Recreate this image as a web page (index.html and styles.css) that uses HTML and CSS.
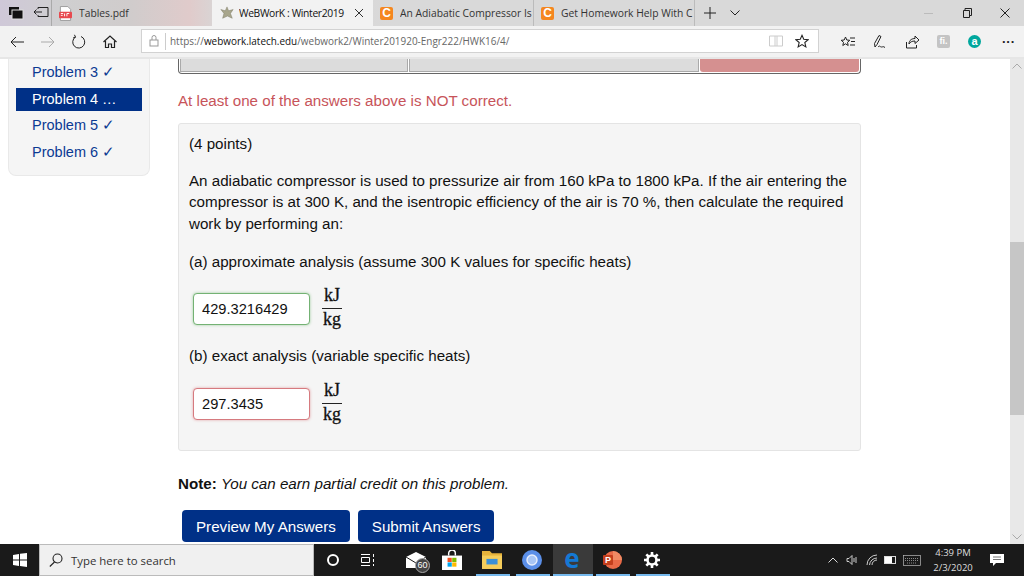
FILE: index.html
```html
<!DOCTYPE html>
<html lang="en">
<head>
<meta charset="utf-8">
<title>WeBWorK : Winter201920</title>
<link rel="stylesheet" href="styles.css">
</head>
<body>
<div class="app">
  <div class="tabbar">
    <div class="tab-tools">
      <svg class="ic16" viewBox="0 0 16 16"><rect x="1" y="2" width="10" height="8" fill="#111"/><rect x="4" y="5" width="11" height="9" fill="#111" stroke="#ddd" stroke-width="1"/></svg>
      <svg class="ic16" viewBox="0 0 16 16" fill="none" stroke="#222"><path d="M5 4V2.500h10v9H5V10M1 7h8M3.500 4.500L1 7l2.500 2.500"/></svg>
    </div>
    <div class="tab tab-pdf">
      <svg class="favicon" viewBox="0 0 14 16"><path d="M1.500 .5h8l3 3v12h-11z" fill="#fff" stroke="#999"/><rect x="0" y="6" width="14" height="7" rx="1" fill="#e8494f"/><path d="M2 8h2.500M2 10h2M6 8v3M8.500 8h2.500M8.500 8v3" stroke="#fff"/></svg>
      <span class="tab-title">Tables.pdf</span>
    </div>
    <div class="tab tab-active">
      <svg class="favicon favstar" viewBox="0 0 16 16"><path d="M8 1l1.800 4.500L15 4l-3 4.500 2 5.500-5.500-2.500L3 14l1.500-5.500L1 4l5 1.500z" fill="#a8a68c" stroke="#777660" stroke-width=".5"/></svg>
      <span class="tab-title">WeBWorK : Winter2019</span>
      <svg class="tab-close" viewBox="0 0 10 10" fill="none" stroke="#333"><path d="M1 1l8 8M9 1l-8 8"/></svg>
    </div>
    <div class="tab tab-sep">
      <span class="chegg">C</span>
      <span class="tab-title">An Adiabatic Compressor Is</span>
    </div>
    <div class="tab tab-sep">
      <span class="chegg">C</span>
      <span class="tab-title">Get Homework Help With C</span>
    </div>
    <div class="tab-actions">
      <svg class="ic12" viewBox="0 0 12 12" stroke="#222" fill="none"><path d="M6 0v12M0 6h12"/></svg>
      <svg class="ic10" viewBox="0 0 10 6" stroke="#222" fill="none"><path d="M.5 .5L5 5 9.500 .5"/></svg>
    </div>
    <div class="window-controls">
      <svg class="ic10" viewBox="0 0 10 10" stroke="#bbb"><path d="M0 5.500h9"/></svg>
      <svg class="ic10" viewBox="0 0 10 10" stroke="#222" fill="none"><path d="M1.500 2.500h6v7h-6zM3 2.500V.5h6.500v7H7.500"/></svg>
      <svg class="ic10" viewBox="0 0 10 10" stroke="#222" fill="none"><path d="M.5 .5l9 9M9.500 .5l-9 9"/></svg>
    </div>
  </div>

  <div class="toolbar">
    <div class="nav">
      <svg class="ic16" viewBox="0 0 16 16" fill="none" stroke="#222"><path d="M15 8H2M7 3L2 8l5 5"/></svg>
      <svg class="ic16" viewBox="0 0 16 16" fill="none" stroke="#aaa"><path d="M1 8h13M9 3l5 5-5 5"/></svg>
      <svg class="ic16" viewBox="0 0 16 16" fill="none" stroke="#222"><path d="M4.500 3A6 6 0 1 0 10 2.500M3.500 .8l1 2.500-2.500.7"/></svg>
      <svg class="ic16" viewBox="0 0 16 16" fill="none" stroke="#222" stroke-width="1.200"><path d="M1.500 8L8 2l6.500 6M3.500 7v6.500h3V10h3v3.500h3V7"/></svg>
    </div>
    <div class="address">
      <svg class="lock" viewBox="0 0 10 12" fill="none" stroke="#999"><rect x="1" y="5" width="8" height="6"/><path d="M3 5V2.500a2 2 0 0 1 4 0V5"/></svg>
      <span class="url">https://<b>webwork.latech.edu</b>/webwork2/Winter201920-Engr222/HWK16/4/</span>
      <svg class="ic14 book" viewBox="0 0 14 12" fill="none" stroke="#ccc"><path d="M.5 1h13v10H.5zM6 1v10M8 1v10"/></svg>
      <svg class="ic14 star" viewBox="0 0 16 16" fill="none" stroke="#222" stroke-width="1.200"><path d="M8 1.500l2 4.500 5 .5-3.800 3.200 1.200 5L8 12l-4.400 2.700 1.200-5L1 6.500 6 6z"/></svg>
    </div>
    <div class="extensions">
      <svg class="ic16" viewBox="0 0 16 16" fill="none" stroke="#222"><path d="M5.500 3l1.300 3 3 .3-2.300 2 .7 3.200-2.700-1.700L2.800 11.500l.7-3.200L1.200 6.300l3-.3zM10 4h5M11 7.500h4M10 11h5"/></svg>
      <svg class="ic16" viewBox="0 0 16 16" fill="none" stroke="#222"><path d="M3 13L2.500 9.500 7 1.500l2 1L5 10.500zM6 13c2-2 2 0 3.500 0S11 12 13 13.500"/></svg>
      <svg class="ic16" viewBox="0 0 16 16" fill="none" stroke="#222"><path d="M2.500 8v6h10v-3M5 10c0-4 3-5.500 6-5.500V2l4 4-4 3.500V7C8 7 6 8 5 10z"/></svg>
      <span class="ext-grey">fi.</span>
      <span class="ext-amazon">a</span>
      <span class="ext-more">···</span>
    </div>
  </div>

  <div class="viewport">
    <div class="page">
      <aside class="sidebar">
        <a class="prob">Problem 3 ✓</a>
        <a class="prob prob-active">Problem 4 …</a>
        <a class="prob">Problem 5 ✓</a>
        <a class="prob">Problem 6 ✓</a>
      </aside>
      <main class="main">
        <div class="attempts">
          <div class="cell cell-a"></div>
          <div class="cell cell-b"></div>
          <div class="cell cell-c"></div>
        </div>
        <p class="error">At least one of the answers above is NOT correct.</p>
        <section class="problem">
          <p class="points">(4 points)</p>
          <p class="statement">An adiabatic compressor is used to pressurize air from 160 kPa to 1800 kPa. If the air entering the compressor is at 300 K, and the isentropic efficiency of the air is 70 %, then calculate the required work by performing an:</p>
          <p class="part">(a) approximate analysis (assume 300 K values for specific heats)</p>
          <div class="answer">
            <div class="field field-ok">429.3216429</div>
            <div class="frac"><span class="num">kJ</span><span class="den">kg</span></div>
          </div>
          <p class="part part-b">(b) exact analysis (variable specific heats)</p>
          <div class="answer answer-b">
            <div class="field field-bad">297.3435</div>
            <div class="frac"><span class="num">kJ</span><span class="den">kg</span></div>
          </div>
        </section>
        <p class="note"><b>Note:</b> <i>You can earn partial credit on this problem.</i></p>
        <div class="buttons">
          <div class="btn">Preview My Answers</div>
          <div class="btn">Submit Answers</div>
        </div>
      </main>
    </div>
    <div class="scrollbar">
      <svg class="arrow" viewBox="0 0 10 6" fill="none" stroke="#aaa"><path d="M.5 5.500L5 1l4.500 4.500"/></svg>
      <div class="thumb"></div>
      <svg class="arrow" viewBox="0 0 10 6" fill="none" stroke="#aaa"><path d="M.5 .5L5 5l4.500-4.500"/></svg>
    </div>
  </div>

  <div class="taskbar">
    <div class="start">
      <svg class="ic14" viewBox="0 0 14 14" fill="#fff"><path d="M0 2l6-1v5.500H0zM7 .8L14 0v6.500H7zM0 7.500h6V13l-6-1zM7 7.500h7V14l-7-1z"/></svg>
    </div>
    <div class="search">
      <svg class="ic14" viewBox="0 0 14 14" fill="none" stroke="#222" stroke-width="1.100"><circle cx="8.500" cy="5.500" r="4.500"/><path d="M5.500 9L.8 13.500"/></svg>
      <span>Type here to search</span>
    </div>
    <div class="task task-first"><span class="cortana"></span></div>
    <div class="task task-view">
      <svg class="ic14" viewBox="0 0 14 14" fill="none" stroke="#fff"><path d="M0 1.500h9M0 12.500h9M.5 4.500h8v5h-8zM12.500 1v3M12.500 6v3M12.500 11v2"/></svg>
    </div>
    <div class="task task-mail">
      <svg class="ic20" viewBox="0 0 20 16"><path d="M0 5L10 0l10 5v11H0z" fill="#fff"/><path d="M0 5l10 6 10-6" fill="none" stroke="#1a1a1a"/></svg>
      <span class="badge">60</span>
    </div>
    <div class="task task-store">
      <svg class="ic20" viewBox="0 0 18 18"><path d="M6 5V3a3 3 0 0 1 6 0v2" fill="none" stroke="#fff" stroke-width="1.300"/><rect y="5" width="18" height="13" fill="#fff"/><rect x="5" y="7" width="3.800" height="3.800" fill="#f25022"/><rect x="9.200" y="7" width="3.800" height="3.800" fill="#7fba00"/><rect x="5" y="11.200" width="3.800" height="3.800" fill="#00a4ef"/><rect x="9.200" y="11.200" width="3.800" height="3.800" fill="#ffb900"/></svg>
    </div>
    <div class="task task-on">
      <svg class="ic20" viewBox="0 0 18 16"><path d="M0 0h7l2 2h9v14H0z" fill="#e6b33c"/><rect y="4" width="18" height="12" fill="#f5cd5b"/><rect x="4" y="7" width="10" height="5" fill="#3b8fd6"/></svg>
    </div>
    <div class="task task-on">
      <svg class="ic20" viewBox="0 0 18 18"><circle cx="9" cy="9" r="9" fill="#5b8fe8"/><circle cx="9" cy="9" r="4.500" fill="#a9c6f5" stroke="#e8eefc" stroke-width="1.300"/></svg>
    </div>
    <div class="task task-on task-edge"><span class="edge">e</span></div>
    <div class="task task-on">
      <svg class="ic20" viewBox="0 0 20 20"><circle cx="11" cy="10" r="9" fill="#ea6a47"/><path d="M11 10h9a9 9 0 0 0-9-9z" fill="#f08a63"/><rect x="1" y="5" width="10" height="10" rx="1" fill="#c43e1c"/><text x="6" y="13" class="ppt-p">P</text></svg>
    </div>
    <div class="task task-on">
      <svg class="ic16" viewBox="0 0 16 16"><circle cx="8" cy="8" r="4.500" fill="none" stroke="#fff" stroke-width="2.600"/><path d="M8 0v3M8 13v3M0 8h3M13 8h3M2.300 2.300l2.200 2.200M11.500 11.500l2.200 2.200M13.700 2.300l-2.200 2.200M4.500 11.500l-2.200 2.200" stroke="#fff" stroke-width="2.600"/></svg>
    </div>
    <div class="tray">
      <svg class="ic10" viewBox="0 0 10 6" fill="none" stroke="#ddd"><path d="M.5 5.500L5 1l4.500 4.500"/></svg>
      <svg class="ic12" viewBox="0 0 12 12" fill="none" stroke="#ccc"><path d="M1 4.500h2L6 1.500v9L3 7.500H1zM8 4v4M10 3v6"/></svg>
      <svg class="ic12" viewBox="0 0 12 12" fill="none" stroke="#ccc"><path d="M1 11a10 10 0 0 1 10-10M3.500 11A7.500 7.500 0 0 1 11 4M6 11a5 5 0 0 1 5-5"/></svg>
      <svg class="ic12 batt" viewBox="0 0 12 8"><rect x=".5" y=".5" width="11" height="7" fill="none" stroke="#ddd"/><rect x="1" y="1" width="7" height="6" fill="#fff"/></svg>
      <svg class="kbd" viewBox="0 0 18 11" fill="none" stroke="#bbb" stroke-width=".7"><rect x=".5" y=".5" width="17" height="10"/><path d="M2 3.500h14M2 5.500h14M4 8h10" stroke-dasharray="1 1"/></svg>
      <div class="clock"><span>4:39 PM</span><span>2/3/2020</span></div>
      <svg class="ic14 notif" viewBox="0 0 14 14"><path d="M0 1h14v9H6l-3 3v-3H0z" fill="#fff"/><path d="M3 4h8M3 6.500h8" stroke="#777"/></svg>
    </div>
  </div>
</div>
</body>
</html>
```
FILE: styles.css
```css
* { box-sizing: border-box; }
html, body { margin: 0; height: 100%; overflow: hidden; }
body { font-family: "Liberation Sans", Arial, sans-serif; color: #111; }
svg { display: block; flex: none; }
p { margin: 0; }

.ic10 { width: 10px; height: 10px; }
.ic12 { width: 12px; height: 12px; }
.ic14 { width: 14px; height: 14px; }
.ic16 { width: 16px; height: 16px; }
.ic20 { width: 20px; height: 20px; }

.app { width: 1024px; height: 576px; display: flex; flex-direction: column; }

/* tab strip */
.tabbar {
  height: 26px; flex: none; display: flex; align-items: stretch;
  background: linear-gradient(90deg, #cfc8d8 0, #cfcfd0 60px, #d0cccc 130px, #e0cbcb 190px, #d9d5d5 215px, #d9d9d9 400px);
  font-family: "Open Sans", "Noto Sans", sans-serif; font-size: 10.300px; line-height: 24px; color: #333;
}
.tab-tools { width: 52px; display: flex; align-items: center; gap: 9px; padding-left: 8px; border-right: 1px solid #aaa; }
.tab { width: 161px; display: flex; align-items: center; padding-left: 7px; gap: 7px; white-space: nowrap; overflow: hidden; }
.tab-pdf { width: 160px; padding-left: 6px; }
.tab-sep { border-right: 1px solid #bbb; }
.tab-active { background: #f2f2f2; color: #111; gap: 5px; padding-left: 7px; }
.tab-active .tab-title { letter-spacing: -.35px; }
.favicon { width: 13px; height: 15px; margin-left: 1px; }
.favstar { width: 14px; height: 14px; }
.tab-title { flex: 1; min-width: 0; overflow: hidden; }
.tab-close { width: 10px; height: 10px; margin-right: 9px; flex: none; }
.chegg {
  width: 13px; height: 13px; border-radius: 2px; background: #f5871f; color: #fff;
  font: bold 12px/13px "Liberation Sans", sans-serif; text-align: center; flex: none;
}
.tab-actions { display: flex; align-items: center; gap: 14px; padding-left: 9px; }
.window-controls { margin-left: auto; display: flex; align-items: center; gap: 28px; padding-right: 14px; }

/* toolbar */
.toolbar { height: 33px; flex: none; background: #f2f2f2; border-bottom: 2px solid #e6e6e6; display: flex; align-items: flex-start; }
.nav { width: 141px; height: 31px; display: flex; align-items: center; gap: 15px; padding-left: 9px; }
.address {
  width: 678px; height: 24px; margin-top: 3px; background: #fff; border: 1px solid #d2d2d2;
  display: flex; align-items: center; font-family: "Open Sans", sans-serif; font-size: 9.950px; color: #666;
}
.lock { width: 10px; height: 12px; margin-left: 7px; }
.url { margin-left: 6px; padding-left: 4px; border-left: 1px solid #ccc; line-height: 17px; flex: 1; white-space: nowrap; }
.url b { font-weight: 400; color: #111; }
.book { margin-right: 12px; }
.star { margin-right: 9px; }
.extensions { flex: 1; height: 31px; display: flex; align-items: center; gap: 16px; padding-left: 21px; }
.ext-grey { width: 13px; height: 13px; margin-left: 1px; border-radius: 2px; background: #c4c4c4; color: #fff; font: bold 9px/13px "Liberation Sans", sans-serif; text-align: center; }
.ext-amazon { width: 13px; height: 13px; margin-left: 2px; border-radius: 50%; background: #00a79d; color: #fff; font: bold 11px/12px "Liberation Sans", sans-serif; text-align: center; }
.ext-more { font-size: 13px; line-height: 13px; color: #222; margin-left: 5px; font-weight: bold; }

/* page */
.viewport { flex: 1; min-height: 0; display: flex; background: #fff; overflow: hidden; }
.page { flex: 1; display: flex; align-items: flex-start; gap: 28px; padding-left: 8px; }
.sidebar {
  width: 142px; height: 117px; padding: 1px 7px 0; background: #f5f5f5;
  border: 1px solid #e9e9e9; border-top: 0; border-radius: 0 0 8px 8px;
  font-size: 14.500px;
}
.prob { display: block; height: 26.500px; line-height: 24px; padding-left: 16px; color: #0b3a93; }
.prob-active { height: 23px; line-height: 23px; margin: 1px 0 2.500px; background: #003087; color: #fff; }
.main { width: 683px; }
.attempts {
  height: 15px; display: flex; gap: 1px; padding: 0 1px 1px;
  border: 1px solid #666; border-top: 0; border-radius: 0 0 4px 4px; background: #fff;
}
.cell { height: 100%; background: #dcdcdc; border: 1px solid #aaa; border-top: 0; }
.cell-a { width: 228px; }
.cell-b { width: 290px; }
.cell-c { flex: 1; background: #d59090; border: 0; border-radius: 0 0 3px 3px; }
.error { margin-top: 18px; font-size: 15.170px; line-height: 18px; color: #c7545a; }
.problem {
  margin-top: 13px; height: 328px; padding: 9px 10px 0; background: #f5f5f5;
  border: 1px solid #e4e4e4; border-radius: 3px; font-size: 15.170px; line-height: 21.500px;
}
.statement { margin-top: 15px; }
.part { margin-top: 17px; }
.part-b { margin-top: 11px; }
.answer { display: flex; align-items: center; gap: 12px; margin: 11px 0 0 4px; height: 50px; }
.answer-b { margin-top: 13px; }
.field {
  width: 117px; height: 32px; padding-left: 8px; background: #fff; border-radius: 4px;
  font-size: 14.670px; line-height: 30px;
}
.field-ok { border: 1px solid #74b274; box-shadow: 0 0 3px #9fcc9f; }
.field-bad { border: 1px solid #d67a7f; box-shadow: 0 0 3px #e3a5a8; }
.frac {
  width: 20px; margin-top: -5px; display: flex; flex-direction: column; align-items: center;
  font: 18px/22px "Liberation Serif", serif; color: #111; -webkit-text-stroke: .3px #111;
}
.num { padding-bottom: 2px; }
.den { border-top: 1px solid #222; width: 100%; text-align: center; line-height: 20px; }
.note { margin-top: 23px; font-size: 15.170px; line-height: 20px; }
.buttons { display: flex; gap: 8px; margin: 16px 0 0 4px; }
.btn {
  height: 32px; padding: 0 14px; background: #003087; color: #fff; border-radius: 4px;
  font-size: 15.170px; line-height: 34px;
}

.scrollbar { width: 14px; flex: none; background: #e8e8e8; display: flex; flex-direction: column; align-items: center; padding: 4px 0; }
.arrow { width: 10px; height: 6px; }
.thumb { width: 14px; height: 173px; margin-top: 173px; margin-bottom: auto; background: #c6c6c6; }

/* taskbar */
.taskbar { height: 32px; flex: none; background: #1a1a1a; display: flex; align-items: stretch; color: #fff; }
.start { width: 39px; display: flex; align-items: center; justify-content: center; }
.search {
  width: 275px; display: flex; align-items: center; gap: 8px; padding-left: 9px;
  background: #f0f0f0; border: 1px solid #bbb; color: #333;
  font-family: "Open Sans", sans-serif; font-size: 11.400px;
}
.task { width: 40px; position: relative; display: flex; align-items: center; justify-content: center; }
.task > svg { margin-right: 2px; }
.task-first { margin-left: -1px; }
.task-view { padding-right: 8px; }
.task-mail { padding-left: 8px; }
.task-on::after { content: ""; position: absolute; left: 3px; right: 3px; bottom: 0; height: 2px; background: #76b9ed; }
.task-edge { background: #3a3a3a; }
.task-edge::after { left: 0; right: 0; }
.cortana { width: 12px; height: 12px; border: 2px solid #fff; border-radius: 50%; }
.badge {
  position: absolute; left: 22px; top: 14px; width: 15px; height: 15px; border-radius: 50%;
  background: #444; border: 1px solid #aaa; font-size: 9px; line-height: 13px; text-align: center;
}
.edge { font: bold 26px/26px "Open Sans", sans-serif; color: #1479d4; margin: -5px 2px 0 0; }
.ppt-p { font: bold 9px "Liberation Sans", sans-serif; fill: #fff; text-anchor: middle; }
.tray { margin-left: auto; display: flex; align-items: center; gap: 8px; padding-right: 20px; }
.batt { margin-left: -2px; }
.kbd { width: 18px; height: 11px; margin-left: -1px; }
.clock {
  display: flex; flex-direction: column; align-items: center; width: 44px; margin-left: 2px; gap: 2px;
  font-family: "Open Sans", sans-serif; font-size: 9.500px; line-height: 13px; color: #ddd;
}
.notif { margin-left: 7px; }
```
